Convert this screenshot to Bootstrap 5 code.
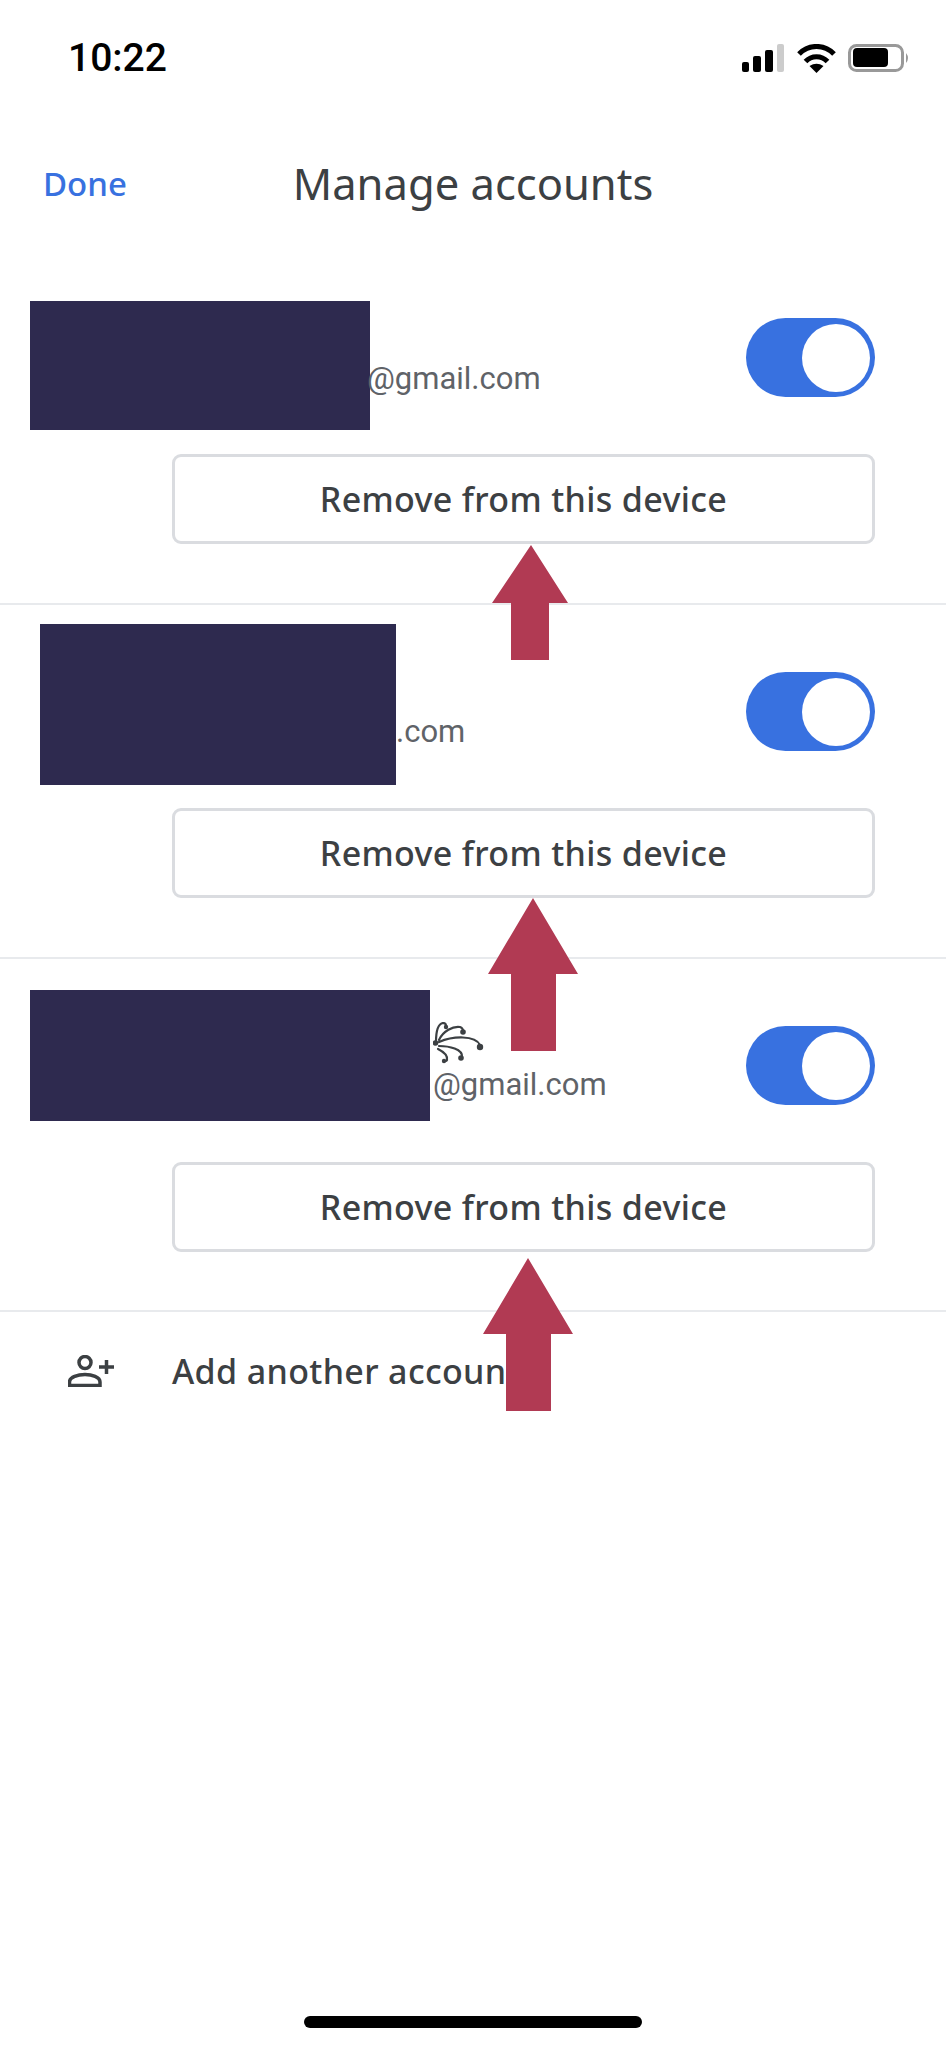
<!DOCTYPE html>
<html lang="en">
<head>
    <meta charset="UTF-8">
    <meta name="viewport" content="width=device-width, initial-scale=1.0">
    <title>Manage accounts</title>
    <link href="https://cdn.jsdelivr.net/npm/bootstrap@5.3.0/dist/css/bootstrap.min.css" rel="stylesheet">
    <style>
        body { font-family: "Noto Sans", Roboto, "Liberation Sans", sans-serif; color: #3c4043; background: #fff; }

        /* status bar */
        .status-bar { height: 118px; padding: 38px 36px 0 68px; }
        .status-time { font-family: Roboto, sans-serif; font-size: 39px; line-height: 40px; font-weight: 500; color: #000; }
        .status-icons { margin-top: 6px; }

        /* header */
        .top-bar { display: grid; grid-template-columns: 1fr auto 1fr; align-items: center; height: 131px; }
        .done-link { margin-left: 43px; font-size: 33px; font-weight: 500; color: #3871e0; text-decoration: none; }
        .page-title { font-size: 43.500px; font-weight: 400; margin: 0; color: #3c4043; line-height: 1; }

        /* account rows */
        .account-row { height: 354px; }
        .account-row:nth-of-type(3) { height: 353px; }
        .account-row + .account-row, .add-row { border-top: 2px solid #e8eaed; }
        .account-head { height: 205px; }
        .account-row + .account-row .account-head { height: 203px; }
        .redact-a { width: 340px; height: 129px; margin: 52px 0 0 30px; background: #2e2a4f; }
        .redact-b { width: 356px; height: 161px; margin: 19px 0 0 40px; background: #2e2a4f; }
        .redact-c { width: 400px; height: 131px; margin: 31px 0 0 30px; background: #2e2a4f; }
        .email-line { margin-top: 110px; font-family: Roboto, sans-serif; font-size: 31px; line-height: 40px; color: #5f6368; }
        .email-first { margin-left: -3px; }
        .email-second { margin-top: 107px; }
        .email-stack { margin: 63px 0 0 3px; }
        .email-stack .email-line { margin-top: 0; }
        .doodle { display: block; width: 51px; height: 43px; }

        .form-switch.switch-big { padding: 0; margin: 69px 71px 0 auto; min-height: 0; }
        .account-row + .account-row .form-switch.switch-big { margin-top: 67px; }
        .form-switch.switch-big .form-check-input {
            width: 129px; height: 79px; margin: 0; float: none; display: block; border: 0; border-radius: 40px;
            background-color: #3871e0; background-size: 79px 79px; background-position: right center;
            background-image: url("data:image/svg+xml,%3csvg xmlns='http://www.w3.org/2000/svg' viewBox='0 0 79 79'%3e%3ccircle cx='40' cy='40' r='34' fill='%23fff'/%3e%3c/svg%3e");
        }
        .device-btn {
            display: block; width: 703px; height: 90px; margin-left: 172px; padding: 0;
            border: 3px solid #dadce0; border-radius: 9px; background: #fff;
            font-size: 34px; letter-spacing: .35px; font-weight: 500; color: #3c4043;
        }

        /* add account */
        .add-row { height: 120px; }
        .add-icon { width: 46px; height: 32px; margin: 0 58px 0 68px; }
        .add-text { font-size: 34px; letter-spacing: .35px; font-weight: 500; color: #3c4043; }

        /* annotation arrows */
        .note-arrow { position: absolute; z-index: 1; fill: #b13a53; }
        .arrow-a { left: 492px; top: 296px; width: 76px; height: 115px; }
        .arrow-b { left: 488px; top: 293px; width: 90px; height: 153px; }
        .arrow-c { left: 483px; top: -54px; width: 90px; height: 153px; }

        .home-bar { width: 338px; height: 12px; margin: auto auto 20px; background: #000; border-radius: 6px; }
    </style>
</head>
<body>
    <main class="d-flex flex-column min-vh-100">
        <div class="status-bar d-flex justify-content-between align-items-start">
            <span class="status-time">10:22</span>
            <svg class="status-icons" width="168" height="30" viewBox="0 0 168 30" aria-hidden="true">
                <rect x="0" y="18" width="7" height="10" rx="2"/>
                <rect x="11" y="12" width="8" height="16" rx="2"/>
                <rect x="23" y="6" width="8" height="22" rx="2"/>
                <rect x="35" y="0" width="7" height="28" rx="2" fill="#ccc"/>
                <path d="M57 10A24 24 0 0 1 92 10M63.500 17.500A15 15 0 0 1 85.500 17.500" fill="none" stroke="#000" stroke-width="5"/>
                <path d="M67.500 22Q74.500 17.500 81.500 22L74.500 29Z"/>
                <rect x="107.500" y="1.500" width="53" height="25" rx="7" fill="none" stroke="#999" stroke-width="3"/>
                <rect x="111" y="4" width="35" height="19" rx="4"/>
                <path d="M164 9Q168 14 164 19Z" fill="#999"/>
            </svg>
        </div>

        <div class="top-bar">
            <a href="#" class="done-link">Done</a>
            <h1 class="page-title">Manage accounts</h1>
        </div>

        <section class="account-row position-relative">
            <div class="account-head d-flex align-items-start">
                <div class="redact-a flex-shrink-0"></div>
                <div class="email-line email-first">@gmail.com</div>
                <div class="form-check form-switch switch-big"><input class="form-check-input" type="checkbox" role="switch" checked aria-label="Account on"></div>
            </div>
            <button type="button" class="btn device-btn">Remove from this device</button>
            <svg class="note-arrow arrow-a" viewBox="0 0 76 115"><polygon points="39,0 76,58 57,58 57,115 19,115 19,58 0,58"/></svg>
        </section>

        <section class="account-row position-relative">
            <div class="account-head d-flex align-items-start">
                <div class="redact-b flex-shrink-0"></div>
                <div class="email-line email-second">.com</div>
                <div class="form-check form-switch switch-big"><input class="form-check-input" type="checkbox" role="switch" checked aria-label="Account on"></div>
            </div>
            <button type="button" class="btn device-btn">Remove from this device</button>
            <svg class="note-arrow arrow-b" viewBox="0 0 90 153"><polygon points="45,0 90,76 68,76 68,153 23,153 23,76 0,76"/></svg>
        </section>

        <section class="account-row position-relative">
            <div class="account-head d-flex align-items-start">
                <div class="redact-c flex-shrink-0"></div>
                <div class="email-stack">
                    <svg class="doodle" viewBox="0 0 51 43" fill="none" stroke="#3c4043" stroke-width="2.200" stroke-linecap="round" aria-hidden="true">
                        <path d="M3 20C3 11 4 2 10 1Q13 1 13 4"/>
                        <path d="M6 18C10 9 20 4 27 5Q30 6 30 9"/>
                        <path d="M6 20C20 14 42 13 47 23"/>
                        <path d="M6 24C16 24 30 27 29 35"/>
                        <path d="M5 27C9 29 15 33 14 38Q13 40 11 38"/>
                        <g fill="#3c4043" stroke="none"><circle cx="2.500" cy="21" r="2.800"/><circle cx="13" cy="5" r="2.200"/><circle cx="30" cy="10" r="2.800"/><circle cx="47" cy="25" r="3.200"/><circle cx="28" cy="36" r="2.800"/><circle cx="11" cy="39" r="2.200"/></g>
                    </svg>
                    <div class="email-line">@gmail.com</div>
                </div>
                <div class="form-check form-switch switch-big"><input class="form-check-input" type="checkbox" role="switch" checked aria-label="Account on"></div>
            </div>
            <button type="button" class="btn device-btn">Remove from this device</button>
        </section>

        <div class="add-row d-flex align-items-center position-relative">
            <svg class="add-icon" viewBox="0 0 46 32" fill="none" stroke="#3c4043" stroke-width="3.500" aria-hidden="true">
                <circle cx="17" cy="7.500" r="6"/>
                <path d="M1.500 30.500V27C1.500 22 10 19.500 17 19.500S32 22 32 27V30.500Z"/>
                <path d="M31 12H46M38.500 5V19"/>
            </svg>
            <span class="add-text">Add another account</span>
            <svg class="note-arrow arrow-c" viewBox="0 0 90 153"><polygon points="45,0 90,76 68,76 68,153 23,153 23,76 0,76"/></svg>
        </div>

        <div class="home-bar"></div>
    </main>
    <script src="https://cdn.jsdelivr.net/npm/bootstrap@5.3.0/dist/js/bootstrap.bundle.min.js"></script>
</body>
</html>
